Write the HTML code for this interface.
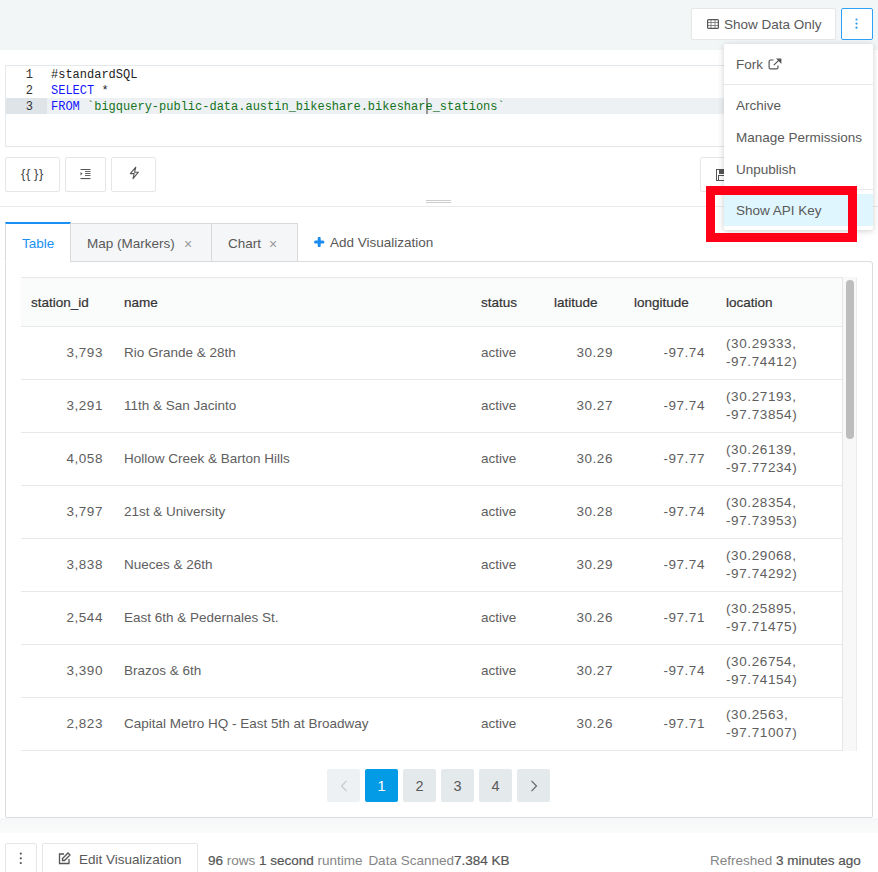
<!DOCTYPE html>
<html><head><meta charset="utf-8">
<style>
*{box-sizing:border-box;margin:0;padding:0}
html,body{width:878px;height:872px;overflow:hidden;background:#fff;font-family:"Liberation Sans",sans-serif;color:#595959;font-size:13.5px}
.abs{position:absolute}
#topbar{left:0;top:0;width:878px;height:50px;background:#f3f6f7}
.btn{position:absolute;background:#fff;border:1px solid #e6e6e6;border-radius:2px}
#editor{left:5px;top:65px;width:868px;height:82px;border:1px solid #e3e8ec;background:#fff}
.ln{position:absolute;left:0;width:41px;height:16px;padding-top:1px;text-align:right;font:12px/16px "Liberation Mono",monospace;color:#333;padding-right:14px}
.code{position:absolute;left:45px;margin-top:1px;height:16px;font:12px/16px "Liberation Mono",monospace;color:#222;white-space:pre}
.kw{color:#1515ff}
.str{color:#137321}
#sep{left:0;top:206px;width:878px;height:1px;background:#eaeaea}
#panel{left:5px;top:261px;width:868px;height:557px;border:1px solid #dcdcdc;background:#fff;border-radius:0 3px 2px 2px}
.tab{position:absolute;top:223px;height:39px;border:1px solid #d9d9d9;background:#f4f6f8;color:#595959;font-size:13.5px;line-height:39px}
table{border-collapse:collapse}
.cell{position:absolute}
.row{position:absolute;left:21px;width:821px;height:53px;border-bottom:1px solid #e8e8e8}
.c{position:absolute;top:-1px;height:53px;line-height:53px;color:#5e5e5e;white-space:nowrap}
.r{text-align:right}
.h{position:absolute;top:1px;height:48px;line-height:48px;color:#333;-webkit-text-stroke:0.2px #333}
.x{position:absolute;top:1px;color:#999;font-size:14px}
.loc{line-height:18px;padding-top:9px;white-space:normal;letter-spacing:0.6px}
.r{letter-spacing:0.55px}
.t{white-space:nowrap}
.t b{font-weight:normal;color:#555;-webkit-text-stroke:0.2px #555}
.mi{position:absolute;left:12px;height:20px;line-height:20px;color:#595959;white-space:nowrap}
.pg{position:absolute;top:769px;width:33px;height:33px;border-radius:2px;background:#e4e9ec;text-align:center;line-height:34px;color:#595959;font-size:14.5px}
</style></head><body>
<div id="topbar" class="abs"></div>
<div class="btn" style="left:691px;top:8px;width:145px;height:32px;"></div>
<svg class="abs" style="left:707px;top:19px" width="12" height="10" viewBox="0 0 12 10"><path d="M0.5 3.5H11.5M0.5 6.5H11.5M4 0.5V9.5M8 0.5V9.5" stroke="#888" stroke-width="1" fill="none"/><rect x="0.6" y="0.6" width="10.8" height="8.8" rx="1" stroke="#555" stroke-width="1.2" fill="none"/></svg>
<div class="abs t" style="left:724px;top:16px;line-height:17px">Show Data Only</div>
<div class="btn" style="left:841px;top:8px;width:32px;height:32px;border-color:#2ea1f8"></div>
<svg class="abs" style="left:852px;top:15px" width="9" height="17" viewBox="0 0 9 17"><g fill="#2a9df4"><circle cx="4.5" cy="4.5" r="1.1"/><circle cx="4.5" cy="8.6" r="1.1"/><circle cx="4.5" cy="12.7" r="1.1"/></g></svg>



<div id="editor" class="abs">
  <div class="abs" style="left:0;top:32px;width:866px;height:16px;background:#eef1f4"></div>
  <div class="abs" style="left:0;top:32px;width:41px;height:16px;background:#dfe4e8"></div>
  <div class="ln" style="top:0">1</div>
  <div class="ln" style="top:16px">2</div>
  <div class="ln" style="top:32px">3</div>
  <div class="code" style="top:0">#standardSQL</div>
  <div class="code" style="top:16px"><span class="kw">SELECT</span> *</div>
  <div class="abs" style="left:420px;top:32px;width:1.5px;height:16px;background:#999"></div>
  <div class="code" style="top:32px"><span class="kw">FROM</span> <span class="str">`bigquery-public-data.austin_bikeshare.bikeshare_stations`</span></div>
</div>

<div class="btn" style="left:5px;top:157px;width:55px;height:35px"></div>
<div class="abs" style="left:21px;top:166px;font:13px/16px 'Liberation Sans',sans-serif;color:#444;letter-spacing:0.6px">{{&#8201;}}</div>
<div class="btn" style="left:65px;top:157px;width:41px;height:35px"></div>
<svg class="abs" style="left:80px;top:168px" width="12" height="12" viewBox="0 0 12 12"><g fill="#555"><rect x="0.5" y="1" width="10" height="1"/><rect x="5" y="3" width="5.5" height="1" fill="#666"/><rect x="5" y="5" width="5.5" height="1" fill="#666"/><rect x="5" y="7" width="5.5" height="1" fill="#666"/><rect x="0.5" y="10" width="10" height="1.1"/><path d="M0.5 4L2.5 5.8L0.5 7.6Z"/></g></svg>
<div class="btn" style="left:111px;top:157px;width:45px;height:35px"></div>
<svg class="abs" style="left:129px;top:166px" width="11" height="14" viewBox="0 0 11 14"><path d="M6.8 1.2L1.3 7.6H5.2L4 12.6L9.4 6.2H5.6Z" fill="none" stroke="#555" stroke-width="1.1" stroke-linejoin="round"/></svg>
<div class="btn" style="left:700px;top:157px;width:100px;height:35px"></div>
<svg class="abs" style="left:716px;top:169px" width="12" height="12" viewBox="0 0 12 12"><g fill="none" stroke="#555" stroke-width="1" shape-rendering="crispEdges"><path d="M0.5 0.5H10L11.5 2V11.5H0.5Z"/><path d="M3.5 0.5V4.5H8.5V0.5M2.5 11.5V6.5H9.5V11.5"/></g><rect x="4" y="1" width="4" height="3" fill="#555"/></svg>
<div class="abs" style="left:426px;top:200px;width:25px;height:1px;background:#ccc"></div>
<div class="abs" style="left:426px;top:202px;width:25px;height:1px;background:#ccc"></div>

<div id="sep" class="abs"></div>

<div id="panel" class="abs"></div>

<div class="tab" style="left:5px;top:222px;height:40px;width:66px;background:#fff;border-bottom-color:#fff;border-top:2px solid #1a90f5;color:#1a90f5;padding-left:16px;line-height:39px">Table</div>
<div class="tab" style="left:70px;width:142px;padding-left:16px">Map (Markers)<span class="x" style="left:113px">&#215;</span></div>
<div class="tab" style="left:211px;width:87px;padding-left:16px">Chart<span class="x" style="left:57px">&#215;</span></div>
<svg class="abs" style="left:314px;top:237px" width="11" height="10" viewBox="0 0 11 10"><path d="M5.2 1.3V8.7M1.5 5H8.9" stroke="#1a8cf0" stroke-width="3" stroke-linecap="round"/></svg>
<div class="abs t" style="left:330px;top:224px;height:38px;line-height:38px;color:#595959">Add Visualization</div>

<div class="abs" id="thead" style="left:21px;top:277px;width:821px;height:50px;background:#fafbfb;border-top:1px solid #e8e8e8;border-bottom:1px solid #e8e8e8">
<div class="h" style="left:10px">station_id</div>
<div class="h" style="left:103px">name</div>
<div class="h" style="left:460px">status</div>
<div class="h" style="left:533px">latitude</div>
<div class="h" style="left:613px">longitude</div>
<div class="h" style="left:705px">location</div>
</div>
<div class="abs" style="left:842px;top:277px;width:15px;height:474px;background:#f8f8f8;border-left:1px solid #e6e6e6;border-right:1px solid #ececec"></div>
<div class="abs" style="left:846px;top:280px;width:8px;height:159px;background:#bdbdbd;border-radius:4px"></div>
<div class="abs" style="left:0;top:0"></div>
<div class="row" style="top:327px"><div class="c r" style="left:0;width:82px">3,793</div><div class="c" style="left:103px">Rio Grande &amp; 28th</div><div class="c" style="left:460px">active</div><div class="c r" style="left:522px;width:70px">30.29</div><div class="c r" style="left:602px;width:82px">-97.74</div><div class="c loc" style="left:705px">(30.29333,<br>-97.74412)</div></div>
<div class="row" style="top:380px"><div class="c r" style="left:0;width:82px">3,291</div><div class="c" style="left:103px">11th &amp; San Jacinto</div><div class="c" style="left:460px">active</div><div class="c r" style="left:522px;width:70px">30.27</div><div class="c r" style="left:602px;width:82px">-97.74</div><div class="c loc" style="left:705px">(30.27193,<br>-97.73854)</div></div>
<div class="row" style="top:433px"><div class="c r" style="left:0;width:82px">4,058</div><div class="c" style="left:103px">Hollow Creek &amp; Barton Hills</div><div class="c" style="left:460px">active</div><div class="c r" style="left:522px;width:70px">30.26</div><div class="c r" style="left:602px;width:82px">-97.77</div><div class="c loc" style="left:705px">(30.26139,<br>-97.77234)</div></div>
<div class="row" style="top:486px"><div class="c r" style="left:0;width:82px">3,797</div><div class="c" style="left:103px">21st &amp; University</div><div class="c" style="left:460px">active</div><div class="c r" style="left:522px;width:70px">30.28</div><div class="c r" style="left:602px;width:82px">-97.74</div><div class="c loc" style="left:705px">(30.28354,<br>-97.73953)</div></div>
<div class="row" style="top:539px"><div class="c r" style="left:0;width:82px">3,838</div><div class="c" style="left:103px">Nueces &amp; 26th</div><div class="c" style="left:460px">active</div><div class="c r" style="left:522px;width:70px">30.29</div><div class="c r" style="left:602px;width:82px">-97.74</div><div class="c loc" style="left:705px">(30.29068,<br>-97.74292)</div></div>
<div class="row" style="top:592px"><div class="c r" style="left:0;width:82px">2,544</div><div class="c" style="left:103px">East 6th &amp; Pedernales St.</div><div class="c" style="left:460px">active</div><div class="c r" style="left:522px;width:70px">30.26</div><div class="c r" style="left:602px;width:82px">-97.71</div><div class="c loc" style="left:705px">(30.25895,<br>-97.71475)</div></div>
<div class="row" style="top:645px"><div class="c r" style="left:0;width:82px">3,390</div><div class="c" style="left:103px">Brazos &amp; 6th</div><div class="c" style="left:460px">active</div><div class="c r" style="left:522px;width:70px">30.27</div><div class="c r" style="left:602px;width:82px">-97.74</div><div class="c loc" style="left:705px">(30.26754,<br>-97.74154)</div></div>
<div class="row" style="top:698px"><div class="c r" style="left:0;width:82px">2,823</div><div class="c" style="left:103px">Capital Metro HQ - East 5th at Broadway</div><div class="c" style="left:460px">active</div><div class="c r" style="left:522px;width:70px">30.26</div><div class="c r" style="left:602px;width:82px">-97.71</div><div class="c loc" style="left:705px">(30.2563,<br>-97.71007)</div></div>

<div class="pg" style="left:327px;background:#eef1f3"><svg style="position:absolute;left:13px;top:11px" width="8" height="12" viewBox="0 0 8 12"><path d="M6.5 0.8L1.5 6L6.5 11.2" fill="none" stroke="#c3c8cc" stroke-width="1.2"/></svg></div>
<div class="pg" style="left:365px;background:#039be5;color:#fff">1</div>
<div class="pg" style="left:403px">2</div>
<div class="pg" style="left:441px">3</div>
<div class="pg" style="left:479px">4</div>
<div class="pg" style="left:517px"><svg style="position:absolute;left:13px;top:11px" width="8" height="12" viewBox="0 0 8 12"><path d="M1.5 0.8L6.5 6L1.5 11.2" fill="none" stroke="#666" stroke-width="1.2"/></svg></div>


<div class="abs" style="left:0;top:818px;width:878px;height:15px;background:linear-gradient(#f6f7f8,#fafbfb)"></div>
<div class="btn" style="left:5px;top:843px;width:32px;height:34px"></div>
<svg class="abs" style="left:16px;top:849px" width="9" height="18" viewBox="0 0 9 18"><g fill="#555"><circle cx="4.8" cy="4.6" r="1.1"/><circle cx="4.8" cy="9.3" r="1.1"/><circle cx="4.8" cy="14" r="1.1"/></g></svg>


<div class="btn" style="left:42px;top:843px;width:156px;height:34px"></div>
<svg class="abs" style="left:58px;top:852px" width="13" height="13" viewBox="0 0 13 13"><g fill="none" stroke="#555" stroke-width="1.3"><path d="M6 2H1.5V11.5H11V7"/><path d="M10 1L12 3L6.5 8.5H4.5V6.5Z"/></g></svg>
<div class="abs t" style="left:79px;top:851px;line-height:17px;color:#595959">Edit Visualization</div>
<div class="abs t" style="left:208px;top:852px;line-height:17px;color:#858585"><b>96</b> rows <b>1 second</b> runtime <span style="margin-left:2px">Data Scanned</span><b>7.384 KB</b></div>
<div class="abs t" style="left:710px;top:852px;line-height:17px;color:#858585">Refreshed <b>3 minutes ago</b></div>

<div class="abs" style="left:724px;top:44px;width:149px;height:186px;background:#fff;border-radius:2px;box-shadow:0 1px 6px rgba(0,0,0,0.2)">
<div class="mi" style="top:11px">Fork <svg style="position:absolute;left:32px;top:3px" width="14" height="12" viewBox="0 0 14 12"><g fill="none" stroke="#555" stroke-width="1.2"><path d="M5.5 2H2.6Q1.1 2 1.1 3.5V9.4Q1.1 10.9 2.6 10.9H8.5Q10 10.9 10 9.4V7.5"/><path d="M5.8 7.2L11.2 1.8"/></g><path d="M8 0.6H13.4V6Z" fill="#555"/></svg></div>
<div class="abs" style="left:0;top:40px;width:149px;height:1px;background:#e8e8e8"></div>
<div class="mi" style="top:52px">Archive</div>
<div class="mi" style="top:84px">Manage Permissions</div>
<div class="mi" style="top:116px">Unpublish</div>
<div class="abs" style="left:0;top:145px;width:149px;height:1px;background:#e8e8e8"></div>
<div class="abs" style="left:0;top:150px;width:149px;height:32px;background:#e0f6fe"></div>
<div class="mi" style="top:157px">Show API Key</div>
</div>
<div class="abs" style="left:706px;top:186px;width:151px;height:56px;border:9px solid #ff0018"></div>
</body></html>
